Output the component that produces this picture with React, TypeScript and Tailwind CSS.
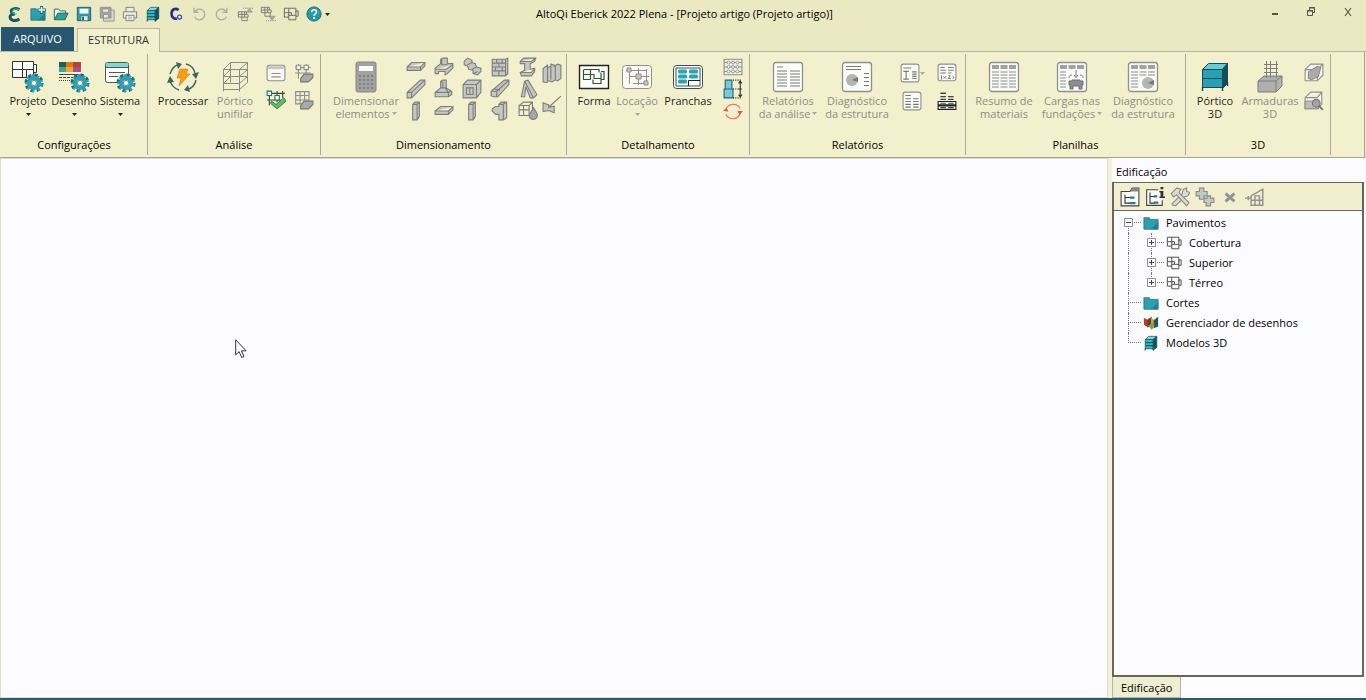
import type { ReactNode } from "react";

const GRAY = "#8f8f8f";
const MID = "#c6c6c2";
const INK = "#3c463c";

type SvgProps = { size?: string; box?: string; children: ReactNode };

function Svg({ size = "h-[18px] w-[18px]", box = "0 0 18 18", children }: SvgProps) {
  return (
    <svg viewBox={box} className={`${size} shrink-0`} fill="none" aria-hidden="true">
      {children}
    </svg>
  );
}

function Big({ children }: { children: ReactNode }) {
  return <Svg size="h-8 w-8" box="0 0 32 32">{children}</Svg>;
}

/* ---------- shared drawings ---------- */

function Gear() {
  return (
    <g>
      <circle cx="22" cy="22" r="7" stroke="#2b6473" strokeWidth="5" strokeDasharray="3 2.5" />
      <circle cx="22" cy="22" r="7.6" stroke="#2fa5b8" strokeWidth="2.6" strokeDasharray="2.2 3.3" strokeDashoffset="-.4" />
      <circle cx="22" cy="22" r="5" stroke="#2fa0b4" strokeWidth="4" />
      <circle cx="22" cy="22" r="2.6" fill="#fff" stroke="#2b6473" strokeWidth=".7" />
    </g>
  );
}

function Page({ children, inset = false }: { children?: ReactNode; inset?: boolean }) {
  return (
    <g>
      <rect x="1.5" y="1.5" width="29" height="29" rx="2.5" fill="#fbfbf8" stroke={GRAY} strokeWidth="1.3" />
      {inset && (
        <g fill="#a2a2a2">
          <rect x="4" y="4" width="7" height="4" />
          <rect x="12.5" y="4" width="7" height="4" />
          <rect x="21" y="4" width="7" height="4" />
        </g>
      )}
      {children}
    </g>
  );
}

function Plan({ color = INK }: { color?: string }) {
  return (
    <g stroke={color} strokeWidth="1.1">
      <path d="M1.500 2.500h13v5M1.500 2.500v10h5M1.500 7.500h8v3M6.500 2.500v13h8v-4M9.500 10.500h5M6.500 10.500h3" />
      <path d="M14.500 5.500h2.500v6h-2.500z" />
    </g>
  );
}

function Building({ light = "#35b4c4", dark = "#14505c" }: { light?: string; dark?: string }) {
  return (
    <g stroke={dark} strokeWidth=".8">
      <path d="M2.500 5l4-3.500h9L11.500 5z" fill="#8fd8de" />
      <path d="M2.500 5h9v3.500h-9zM2.500 8.500h9v3.500h-9zM2.500 12h9v3.500h-9z" fill={light} />
      <path d="M11.500 5l4-3.500V14l-4 3z" fill={dark} />
      <path d="M2.500 15v2.500M11.500 15v2.500" strokeWidth="1.200" />
    </g>
  );
}

function Folder({ plus = false }: { plus?: boolean }) {
  return (
    <g>
      <path d="M1 3h6l1.500 2H17v11H1z" fill="#2b9fb0" stroke="#1e6976" strokeWidth=".8" />
      <path d="M9 16l8-8v8z" fill="#227f8e" />
      {plus && (
        <g>
          <path d="M13 0v9M8.500 4.500H18" stroke="#1e6976" strokeWidth="3.400" />
          <path d="M13 1v7M9.500 4.500H17" stroke="#e8fbfb" strokeWidth="1.800" />
        </g>
      )}
    </g>
  );
}

/* ---------- title bar ---------- */

const quickAccess: { label: string; disabled?: boolean; icon: ReactNode }[] = [
  {
    label: "Eberick",
    icon: (
      <g>
        <path d="M14 4C9 1.500 4 3.500 5 6.500c.5 1.500 2 2.500 4 2.500-3 0-6 1-5.500 4 .5 3.500 6 4.500 10.500 1.500" stroke="#17566a" strokeWidth="3.400" />
        <path d="M13.500 4C9 2.500 6 4 6 6.500c.5 2 3 2.500 5 2.500" stroke="#37c08b" strokeWidth="1.300" />
      </g>
    ),
  },
  { label: "Novo projeto", icon: <Folder plus /> },
  {
    label: "Abrir projeto",
    icon: (
      <g stroke="#215f6b" strokeWidth="1">
        <path d="M1.500 15.500V3.500h5l1.500 2h6v3" fill="#f3f3e2" />
        <path d="M1.500 15.500l4-7.500H17l-3.500 7.500z" fill="#2ba58f" />
      </g>
    ),
  },
  {
    label: "Salvar",
    icon: (
      <g>
        <path d="M1.500 1.500h15v15h-15z" fill="#2aa2ad" stroke="#185865" />
        <path d="M4 3h10v5.500H4z" fill="#f6f8f2" />
        <path d="M5.500 11h8v5.500h-8z" fill="#eef3ee" stroke="#185865" strokeWidth=".7" />
        <path d="M7 12h2v4H7z" fill="#185865" />
      </g>
    ),
  },
  {
    label: "Salvar tudo",
    disabled: true,
    icon: (
      <g stroke={GRAY}>
        <path d="M5 4.500h12V17H5z" fill="#d8d8d0" />
        <path d="M1.500 1.500h12v12h-12z" fill="#a5a5a5" />
        <path d="M4 3.500h7v3.500H4zM5 9.500h5.500v4H5z" fill="#ececea" />
      </g>
    ),
  },
  {
    label: "Imprimir",
    icon: (
      <g stroke="#767676">
        <path d="M4.500 6V1.500h9V6M1.500 6.500h15v7h-15z" fill="#ececdc" />
        <path d="M4.500 10.500h9v6h-9z" fill="#fbfbf6" />
        <path d="M6.500 12.500h5M6.500 14.500h5" strokeWidth=".7" />
      </g>
    ),
  },
  { label: "Pórtico 3D", icon: <Building /> },
  {
    label: "AltoQi Cloud",
    icon: (
      <g>
        <path d="M12 4.500C8 1.500 4 4 4 8.500c0 4.500 3 6.500 6 5.500" stroke="#22308f" strokeWidth="3" />
        <circle cx="13" cy="12.500" r="2.200" fill="#fff" stroke="#3a49c4" strokeWidth="1.500" />
      </g>
    ),
  },
  {
    label: "Desfazer",
    disabled: true,
    icon: <path d="M3.500 2v5h5M4 7a6 6 0 1 1 0 5" stroke="#adada5" strokeWidth="1.500" />,
  },
  {
    label: "Refazer",
    disabled: true,
    icon: <path d="M14.500 2v5h-5M14 7a6 6 0 1 0 0 5" stroke="#adada5" strokeWidth="1.500" />,
  },
  {
    label: "Pavimento acima",
    icon: (
      <g stroke="#777">
        <path d="M1.500 6.500h9v3M1.500 6.500v6h9M5.500 6.500v10h6v-4M1.500 9.500h11v3h-2M8.500 6.500v6" />
        <path d="M7 2.500h11" strokeDasharray="1 1" />
        <path d="M10.500 7l3.500-4 3.500 4z" fill="#aaa" strokeWidth=".5" />
      </g>
    ),
  },
  {
    label: "Pavimento abaixo",
    icon: (
      <g stroke="#777">
        <path d="M1.500 1.500h9v3M1.500 1.500v6h9M5.500 1.500v10h6v-4M1.500 4.500h11v3h-2M8.500 1.500v6" />
        <path d="M7 16.500h11" strokeDasharray="1 1" />
        <path d="M10 11.500h7L13.500 16z" fill="#aaa" strokeWidth=".5" />
      </g>
    ),
  },
  { label: "Croqui", icon: <Plan color="#6b6b6b" /> },
  {
    label: "Ajuda",
    icon: (
      <g>
        <circle cx="9" cy="9" r="8" fill="#2398aa" stroke="#1c6674" />
        <path d="M6.300 7c0-3.800 5.500-3.500 5.500-.3C11.800 9 9 8.600 9 11" stroke="#fff" strokeWidth="1.800" />
        <path d="M8 12.500h2v2H8z" fill="#fff" />
      </g>
    ),
  },
];

function Caret({ faded = false }: { faded?: boolean }) {
  return (
    <Svg size="h-[3px] w-[5px]" box="0 0 5 3">
      <path d="M0 0h5L2.500 3z" fill={faded ? "#a8a8a8" : "#222"} />
    </Svg>
  );
}

function TitleBar() {
  return (
    <header className="flex h-7 shrink-0 items-center pl-[3px]">
      <div className="flex flex-1 items-center">
        {quickAccess.map((q) => (
          <button key={q.label} aria-label={q.label} disabled={q.disabled} className="flex h-6 w-[23px] items-center justify-center">
            <Svg size="h-4 w-4">{q.icon}</Svg>
          </button>
        ))}
        <button aria-label="Personalizar">
          <Caret />
        </button>
      </div>
      <h1 className="text-[11px] leading-4 text-black">AltoQi Eberick 2022 Plena - [Projeto artigo (Projeto artigo)]</h1>
      <div className="flex flex-1 items-center justify-end pb-1 text-[#555]">
        <button aria-label="Minimizar" className="flex w-9 justify-center">
          <Svg size="h-3 w-3" box="0 0 12 12"><path d="M3 8h6" stroke="currentColor" strokeWidth="2" /></Svg>
        </button>
        <button aria-label="Restaurar" className="flex w-9 justify-center">
          <Svg size="h-3 w-3" box="0 0 12 12">
            <path d="M4.500 4V1.500h5v5H8M2.500 4.500h5v5h-5z" stroke="currentColor" />
            <path d="M4 2h6M2 5h6" stroke="currentColor" />
          </Svg>
        </button>
        <button aria-label="Fechar" className="flex w-[37px] justify-center">
          <Svg size="h-3 w-3" box="0 0 12 12"><path d="M3 2l6 8M9 2l-6 8" stroke="currentColor" strokeWidth="1.200" /></Svg>
        </button>
      </div>
    </header>
  );
}

/* ---------- ribbon ---------- */

type CommandProps = {
  icon: ReactNode;
  lines: string[];
  width: string;
  disabled?: boolean;
  caret?: "below" | "inline";
};

function Command({ icon, lines, width, disabled = false, caret }: CommandProps) {
  return (
    <button
      disabled={disabled}
      className={`flex shrink-0 flex-col items-center text-[11px] leading-[13px] whitespace-nowrap ${width} ${disabled ? "text-[#8d8d8a]" : "text-[#1f1f1f]"}`}
    >
      <Big>{icon}</Big>
      <span className="mt-px">{lines[0]}</span>
      {lines[1] && (
        <span className="flex items-center">
          {lines[1]}
          {caret === "inline" && <span className="ml-[2px]"><Caret faded={disabled} /></span>}
        </span>
      )}
      {caret === "below" && <span className="mt-[6px]"><Caret faded={disabled} /></span>}
    </button>
  );
}

function Small({ label, disabled = true, caret = false, children }: { label: string; disabled?: boolean; caret?: boolean; children: ReactNode }) {
  return (
    <button aria-label={label} disabled={disabled} className="flex items-center justify-center">
      <Svg size="h-5 w-5">{children}</Svg>
      {caret && <Caret faded />}
    </button>
  );
}

function Group({ title, width, inset, children }: { title: string; width: string; inset: string; children: ReactNode }) {
  return (
    <section aria-label={title} className={`my-[2px] flex shrink-0 flex-col border-r border-[#a9a9a0] ${width}`}>
      <div className={`flex flex-1 items-start pt-[7px] ${inset}`}>{children}</div>
      <h2 className="pb-[2px] text-center text-[11px] leading-4 text-black">{title}</h2>
    </section>
  );
}

const tableLines = "M5 6h6M5 10h10M5 13h10M5 16h10M5 19h10M5 22h10M5 25h10M18 10h10M18 13h10M18 16h10M18 19h10M18 22h10M18 25h10";

const members: { label: string; icon: ReactNode }[] = [
  { label: "Vigas", icon: <path d="M1 9l4-4h12v3l-4 4H1zM1 9h12l4-4M13 9v3" /> },
  { label: "Blocos", icon: <path d="M1 10l5-4V2l2-1h4v5h5v4l-5 5-2 1v-3H4v2H1zM7 7h5M1 11h10l6-4M7 2v5M6 6l-5 4" /> },
  { label: "Escadas", icon: <path d="M2 4l3-3 4 2v2l3 1 1 3 4 1v3l-3 3-4-1v-3l-4-1-1-3-3-1zM5 7l4-2M9 11l4-2M10 15l4-2" /> },
  { label: "Alvenaria", icon: <path d="M2 2h12l2-1v14l-2 2H2zM2 5.500h12M2 9h12M2 12.500h12M6 2v3.500M11 2v3.500M8 5.500V9M5 9v3.500M11 9v3.500M8 12.500V17M14 2v15" /> },
  { label: "Perfis metálicos", icon: <path d="M2 4l3-3h11l-1 3-4 2v5l4-1v3l-3 4H3l-1-3 4-2V6L2 6zM2 4h10l4-3M3 14h9l3-4" /> },
  { label: "Barras", icon: <path d="M1 12L13 1h4v4L5 17H1zM1 12h4v5M5 12L17 1" /> },
  { label: "Sapatas", icon: <path d="M1 12l5-4V2l2-1h3v7l5 3v3l-3 2H1zM1 12h12l3-1M13 12v4M6 2l2 1v5M6 8h4l3 4" /> },
  { label: "Reservatórios", icon: <path d="M1 5l4-4h12v11l-4 5H1zM1 5h12v12M13 5l4-4M4 8h6v6H4zM7 8v6" /> },
  { label: "Vigas metálicas", icon: <path d="M1 11L13 1h4v4L7 16H3l-2-1zM1 11h5v5M6 11L17 1M4 9l5 1" /> },
  { label: "Rampas", icon: <path d="M3 16L6 2l3-1 8 13-3 3h-3L7 7 6 16zM6 2l8 15" /> },
  { label: "Pilares", icon: <path d="M6 3l2-2h4v13l-2 3H6zM6 3h4v14M10 3l2-2" /> },
  { label: "Lajes", icon: <path d="M1 9l5-4h11v3l-4 4H1zM1 9h12l4-4M13 9v3" /> },
  { label: "Tubulões", icon: <path d="M6 3l2-2h4v13l-2 3H6zM6 3h4v14M10 3l2-2" /> },
  { label: "Consolos", icon: <path d="M8 3l2-2h5v14l-3 2H8v-5H5L2 9V7l3-2h3zM8 3h4v14M12 3l3-2" /> },
  {
    label: "Incêndio",
    icon: (
      <g>
        <path d="M1 4l4-3h8v9M1 4h9v9H1zM1 8h9M5 4v9M10 4l3-3" fill="none" />
        <path d="M14 6l3 5c2 7-7 7-7 2 0-2 3-4 4-7z" fill="#a5a5a5" />
      </g>
    ),
  },
];

function Ribbon() {
  return (
    <div className="mr-px flex h-[106px] shrink-0 border-r border-b border-[#a3a39a] bg-[#f3f1cd] pl-[1px]">
      <Group title="Configurações" width="w-[147px]" inset="pl-1">
        <Command
          width="w-[46px]"
          lines={["Projeto"]}
          caret="below"
          icon={
            <g>
              <path d="M.5.5h21v16H.5zM10.500.5v16M.5 8.500h14v8M14.500 8.500h7" fill="#fdfdf9" stroke="#343434" />
              <path d="M21.500 3.500h3v8h-3z" fill="#fdfdf9" stroke="#343434" />
              <Gear />
            </g>
          }
        />
        <Command
          width="w-[46px]"
          lines={["Desenho"]}
          caret="below"
          icon={
            <g>
              <path d="M1 1h7v5H1z" fill="#285e4c" />
              <path d="M8 1h7v5H8z" fill="#d87916" />
              <path d="M15 1h8v5h-8z" fill="#b74339" />
              <path d="M1 6h7v5H1z" fill="#3fa79a" />
              <path d="M8 6h7v5H8z" fill="#efa82e" />
              <path d="M15 6h8v5h-8z" fill="#a8508f" />
              <path d="M1 13.500h21" stroke="#444" />
              <path d="M1 16.500h14" stroke="#444" strokeDasharray="3 1" />
              <path d="M1 19.500h13" stroke="#444" strokeDasharray="1 1" />
              <Gear />
            </g>
          }
        />
        <Command
          width="w-[46px]"
          lines={["Sistema"]}
          caret="below"
          icon={
            <g>
              <rect x="1.5" y="1.5" width="23" height="20" rx="2" fill="#fdfdf9" stroke="#4a5a55" />
              <path d="M2 2h22v4H2z" fill="#85d5d0" />
              <path d="M2 6.500h22M5 11.500h16M5 15.500h9" stroke="#4a5a55" />
              <Gear />
            </g>
          }
        />
      </Group>

      <Group title="Análise" width="w-[173px]" inset="pl-[7px]">
        <Command
          width="w-[56px]"
          lines={["Processar"]}
          icon={
            <g>
              <g stroke="#3b675b" strokeWidth="1.4">
                <path d="M3 13C5 7 8 4 13 3" />
                <path d="M19 3c5 1 8 5 9 9" />
                <path d="M29 19c-1 5-5 9-10 10" />
                <path d="M12 29c-4-1-8-5-9-9" />
              </g>
              <g fill="#3b675b">
                <path d="M9 1l6 2-4 5z" />
                <path d="M25 13l7-2-3 7z" />
                <path d="M23 31l-6-2 4-5z" />
                <path d="M0 22l3-7 4 6z" />
              </g>
              <path d="M13 8h8l-2 5h4L12 25l2-8h-4z" fill="#f59d15" stroke="#e0760f" strokeWidth=".6" />
            </g>
          }
        />
        <Command
          width="w-[48px]"
          disabled
          lines={["Pórtico", "unifilar"]}
          icon={
            <g stroke="#8b8b8b">
              <path d="M4.500 8.500v22M20.500 8.500v22M11.500 1.500v20M28.500 1.500v20" />
              <path d="M4.500 8.500h16l8-7h-17zM4.500 15.500h16l8-7h-17zM4.500 22.500h16l8-7h-17z" />
              <path d="M4.500 28.500h16l8-7" />
            </g>
          }
        />
        <div className="-mt-[2px] ml-[3px] grid w-14 grid-cols-2 grid-rows-[27px_27px]">
          <Small label="Avisos">
            <rect x="1" y="2" width="16" height="14" rx="2" fill="#f9f9f2" stroke={GRAY} />
            <path d="M1.500 3h15v2.500h-15z" fill={MID} />
            <path d="M5 9.500h8M5 12.500h8" stroke={GRAY} />
          </Small>
          <Small label="Remover carga">
            <path d="M1 4h14M1 9h14M4 1v13M11 1v9" stroke={GRAY} />
            <path d="M2 2h4v4H2zM9 2h4v4H9z" fill="#eee" stroke={GRAY} />
            <path d="M6 14l3-4h8v3l-4 4H6z" fill="#aaa" stroke="#777" />
          </Small>
          <Small label="Verificar grelha" disabled={false}>
            <path d="M1 3h16M1 9h12M3 1v13M10 1v10M15 1v6" stroke="#3c463c" />
            <path d="M1 1h4v4H1zM8 5h4v4H8z" fill="#eafaf4" stroke="#28707a" />
            <path d="M5 10l4 3 7-6 2 3-8 7-6-5z" fill="#59bd62" stroke="#2f7b3a" strokeWidth=".8" />
          </Small>
          <Small label="Remover grelha">
            <path d="M1.500 1.500h12v11h-12zM5.500 1.500v11M9.500 1.500v11M1.500 5h12M1.500 9h12" stroke={GRAY} />
            <path d="M6 14l3-4h8v3l-4 4H6z" fill="#aaa" stroke="#777" />
          </Small>
        </div>
      </Group>

      <Group title="Dimensionamento" width="w-[246px]" inset="pl-[9px]">
        <Command
          width="w-[72px]"
          disabled
          caret="inline"
          lines={["Dimensionar", "elementos"]}
          icon={
            <g>
              <rect x="6" y="1" width="20" height="30" rx="2" fill="#a2a2a2" stroke="#858585" />
              <path d="M9 5h14v5H9z" fill="#fafaf5" />
              <g fill="#7f7f7f">
                {[14, 18, 22, 26].map((y) => (
                  <path key={y} d={`M9 ${y}h2v2h-2zM13 ${y}h2v2h-2zM17 ${y}h2v2h-2zM21 ${y}h2v2h-2z`} />
                ))}
              </g>
            </g>
          }
        />
        <div className="-mt-[5px] grid w-[140px] grid-cols-5 grid-rows-[22px_22px_22px]">
          {members.map((m) => (
            <Small key={m.label} label={m.label}>
              <g fill={MID} stroke="#7e7e7e">{m.icon}</g>
            </Small>
          ))}
        </div>
        <div className="-mt-1 grid w-4 grid-rows-[32px_32px]">
          <Small label="Painéis">
            <path d="M1 5l4-3v2l3-1V1l3 1v1l3-2 3 1v12l-3 2-2-1-3 2-3-1-2 2-3-1zM5 4v12M8 3v12M12 3v12" fill={MID} stroke="#7e7e7e" />
          </Small>
          <Small label="Cortar painel">
            <path d="M1 7l5 2v2l5-1v6l-5-2-5 1zM6 11L17 1" fill={MID} stroke="#7e7e7e" />
          </Small>
        </div>
      </Group>

      <Group title="Detalhamento" width="w-[183px]" inset="pl-[7px]">
        <Command
          width="w-10"
          lines={["Forma"]}
          icon={
            <g>
              <path d="M1.500 4.500h29v23h-29z" fill="#fdfdf9" stroke="#222" strokeWidth="1.4" />
              <path d="M6 8.500h15v3M5.500 8.500v10h7M6 13.500h10v4M12.500 8.500v10M15 18.500v4h8v-5M16 17.500h7v-6M23 10.500h3v8h-3" stroke="#2b5534" strokeWidth="1.2" />
            </g>
          }
        />
        <Command
          width="w-[46px]"
          disabled
          caret="below"
          lines={["Locação"]}
          icon={
            <g stroke={GRAY}>
              <rect x="1.5" y="4.500" width="29" height="23" rx="3" fill="#fafaf2" />
              <path d="M5 9.500h20M8.500 8v15M17.500 7v17M25.500 8v15M8 15.500h20M12 22.500h15" />
              <path d="M6 7h4v4H6zM15 13h5v5h-5zM23 20h4v4h-4z" fill={MID} />
            </g>
          }
        />
        <Command
          width="w-[56px]"
          lines={["Pranchas"]}
          icon={
            <g>
              <rect x="1.500" y="4.500" width="29" height="23" rx="3" fill="#fdfdf9" stroke="#35525a" />
              <path d="M4 7h24v18H4z" stroke="#35525a" />
              <g fill="#2aa3b4">
                <rect x="6" y="8.500" width="9" height="4" rx="1.500" />
                <rect x="6" y="13.500" width="9" height="4" rx="1.500" />
                <rect x="6" y="18.500" width="9" height="4" rx="1.500" />
                <rect x="17" y="8.500" width="9" height="4" rx="1.500" />
                <rect x="17" y="13.500" width="9" height="4" rx="1.500" />
              </g>
              <path d="M16.500 25v-5.500H28" stroke="#222" />
            </g>
          }
        />
        <div className="-mt-[5px] grid w-[34px] grid-rows-[22px_22px_22px]">
          <Small label="Armaduras">
            <path d="M1 2h16v14H1z" fill="#eeeee4" stroke={GRAY} />
            <path d="M1 5h16M1 9h16M1 13h16" stroke={GRAY} />
            {[5, 9, 13].map((x) => (
              <g key={x} fill="#fff" stroke={GRAY} strokeWidth=".8">
                <circle cx={x} cy="5" r="1.300" />
                <circle cx={x} cy="9" r="1.300" />
                <circle cx={x} cy="13" r="1.300" />
              </g>
            ))}
          </Small>
          <Small label="Cotas" disabled={false}>
            <path d="M2 1h6v8H2zM1 9h8v8H1z" fill="#72cddd" stroke="#2f6470" />
            <path d="M9 1h8M9 9h5M9 17h8" stroke="#333" strokeDasharray="1 1" />
            <path d="M15.500 2v14M14 4l1.500-2L17 4M14 14l1.500 2 1.500-2M14 9h3" stroke="#333" />
          </Small>
          <Small label="Atualizar" disabled={false}>
            <path d="M2.500 8a7 7 0 0 1 13-1M15.500 11a7 7 0 0 1-13 1" stroke="#e2796a" strokeWidth="1.100" />
            <path d="M0 9l3-3 2 3.500zM18 9l-3 3.500L13 9z" fill="#df5b42" />
          </Small>
        </div>
      </Group>

      <Group title="Relatórios" width="w-[216px]" inset="pl-[6px]">
        <Command
          width="w-16"
          disabled
          caret="inline"
          lines={["Relatórios", "da análise"]}
          icon={<Page><path d={tableLines} stroke="#7b7b7b" /></Page>}
        />
        <Command
          width="w-[74px]"
          disabled
          lines={["Diagnóstico", "da estrutura"]}
          icon={
            <Page>
              <path d="M5 5.500h15M5 8.500h15M23 12.500h5M23 16.500h5M23 20.500h5M23 24.500h5" stroke="#7b7b7b" />
              <circle cx="11" cy="19" r="6" fill="#b4b4b4" />
              <path d="M11 19l6-3v5z" fill="#777" />
            </Page>
          }
        />
        <div className="-mt-[2px] grid w-[70px] grid-cols-[36px_34px] grid-rows-[28px_28px]">
          <Small label="Relatório de vigas" caret>
            <rect x="1" y="1" width="16" height="16" rx="2" fill="#fafaf5" stroke={GRAY} />
            <path d="M3 4.500h7M3 7.500h5M5.500 7.500v7M3 14.500h5M11 8h4M11 10h4M11 12h4M11 14h4" stroke="#7b7b7b" />
          </Small>
          <Small label="Memorial de cálculo">
            <rect x="1" y="1" width="16" height="15" rx="2" fill="#fafaf5" stroke={GRAY} />
            <path d="M3 4h4M3 6.500h5M3 9h5M10 4h5M10 6.500h5M10 9h3M4 11v4M6 12l2 2M8 12l-2 2M10 11.500h2L10 14h2.500M14 12l1.500 1L14 14" stroke="#7b7b7b" strokeWidth=".9" />
          </Small>
          <Small label="Relatório geral">
            <rect x="1" y="1" width="16" height="16" rx="2" fill="#fafaf5" stroke={GRAY} />
            <path d="M3 4h5M3 7h5M3 9.500h5M3 12h5M3 14.500h5M10 7h5M10 9.500h5M10 12h5M10 14.500h5" stroke="#7b7b7b" />
          </Small>
          <Small label="Quantitativos" disabled={false}>
            <path d="M3 2h5M3 5h5M3 7.500h5M10 5h5M10 7.500h5" stroke="#444" strokeWidth="1.200" />
            <path d="M1 9.500h16v3H1zM1 13.500h16v3H1z" fill="#fff" stroke="#222" />
            <path d="M3 11h5M10 11h5M3 15h5M10 15h5" stroke="#444" />
          </Small>
        </div>
      </Group>

      <Group title="Planilhas" width="w-[220px]" inset="pl-1">
        <Command
          width="w-[68px]"
          disabled
          lines={["Resumo de", "materiais"]}
          icon={
            <Page inset>
              {[11, 14, 17, 20, 23, 26].map((y) => (
                <path key={y} d={`M4 ${y}h7M12.5 ${y}h7M21 ${y}h7`} stroke="#8b8b8b" />
              ))}
            </Page>
          }
        />
        <Command
          width="w-[68px]"
          disabled
          caret="inline"
          lines={["Cargas nas", "fundações"]}
          icon={
            <Page inset>
              <path d="M4 11h6M4 14h6M4 17h6M4 20h6M4 23h6M4 26h6" stroke="#8b8b8b" />
              <path d="M20 9v7M18 14l2 2.500 2-2.500M13 17c0-2 1-3 3-3M27 17c0-2-1-3-3-3" stroke="#777" />
              <path d="M13 20h3v-1h8v1h3v4h-1v4h-3v-3h-6v3h-3v-4h-1z" fill="#8e8e8e" stroke="#707070" />
            </Page>
          }
        />
        <Command
          width="w-[74px]"
          disabled
          lines={["Diagnóstico", "da estrutura"]}
          icon={
            <Page inset>
              <path d="M4 11h7M12.500 11h7M21 11h7M4 14h7M4 17h7M4 20h7M4 23h7M4 26h7M12.500 14h7M21 14h7" stroke="#8b8b8b" />
              <circle cx="21" cy="22" r="6" fill="#b4b4b4" />
              <path d="M21 22l6-3v5z" fill="#777" />
            </Page>
          }
        />
      </Group>

      <Group title="3D" width="w-[145px]" inset="pl-[7px]">
        <Command
          width="w-11"
          lines={["Pórtico", "3D"]}
          icon={
            <g stroke="#164c58">
              <path d="M3.500 8.500l6-6h19l-5 6z" fill="#66cbd3" />
              <path d="M3.500 8.500h20v9h-20zM3.500 17.500h20v9h-20z" fill="#28a0b2" />
              <path d="M23.500 8.500l5-6v20l-5 5z" fill="#174d59" />
              <path d="M3.500 26v4M23.500 26v4M28.500 21v4" strokeWidth="1.400" />
            </g>
          }
        />
        <Command
          width="w-[66px]"
          disabled
          lines={["Armaduras", "3D"]}
          icon={
            <g stroke="#7d7d7d">
              <path d="M12.500 0v17M16.500 0v17M22.500 0v17M10 3.500h14M10 7.500h14M10 11.500h14" />
              <path d="M4 20l6-5h18v10l-6 6H4z" fill="#b0b0ae" />
              <path d="M4 20h18v11M22 20l6-5M12.500 10v7M16.500 10v7M22.500 10v7" />
            </g>
          }
        />
        <div className="-mt-[2px] grid w-[22px] grid-rows-[28px_28px]">
          <Small label="Cubo de corte">
            <path d="M1 6l5-5h11v10l-5 5H1zM1 6h11v10M12 6l5-5" fill="#f6f6ee" stroke={GRAY} />
            <path d="M4 8l8-5 3 1-2 8-6 3-3-1z" fill="#ababab" stroke={GRAY} />
          </Small>
          <Small label="Localizar">
            <path d="M1 6l5-5h10v11l-4 4H1zM1 6h11l4-5" fill="#f6f6ee" stroke={GRAY} />
            <path d="M1 9h12v7H1z" fill="#bdbdbb" stroke={GRAY} />
            <circle cx="11" cy="11" r="3.500" fill="#a4a4a4" stroke="#777" />
            <path d="M13 13l4 4" stroke="#777" strokeWidth="1.800" />
          </Small>
        </div>
      </Group>
    </div>
  );
}

/* ---------- side panel ---------- */

const treeTools: { label: string; disabled?: boolean; icon: ReactNode }[] = [
  {
    label: "Projeto",
    icon: (
      <g>
        <path d="M1 4h8l2-3h6v16H1z" fill="#fbfbf5" stroke="#444" />
        <path d="M9 4l2-3h6v3z" fill="#888" />
        <path d="M4.500 7v7.500H9M4.500 9.500H9" stroke="#333" />
        <path d="M9 8.500h4v2H9zM9 13.500h5v2H9z" fill="#25808b" />
      </g>
    ),
  },
  {
    label: "Informações",
    icon: (
      <g>
        <path d="M12 2.500H1.500v14h14V12" fill="#fbfbf5" stroke="#444" />
        <path d="M4.500 5v9.500H9M4.500 8.500H9" stroke="#333" />
        <path d="M8 7.500h3v2H8zM8 13h4v2H8z" fill="#25808b" />
        <path d="M14 0h2.500v2H14zM13 3.500h3.500v5H18v1.500h-5V8.500h1v-3.500h-1z" fill="#333" />
      </g>
    ),
  },
  {
    label: "Configurar",
    disabled: true,
    icon: (
      <g stroke="#8c8c88">
        <path d="M2 15l9-9 1-4 3-1v3l3 1-2 3-3 1-8 8-3-1z" fill="#dcdcd6" />
        <path d="M1 6l5-5 4 1-2 3 9 9-2 3L6 7 3 9z" fill="#dcdcd6" />
      </g>
    ),
  },
  {
    label: "Adicionar",
    disabled: true,
    icon: (
      <g fill={MID} stroke="#8c8c88">
        <path d="M4 1h4v3h3v4H8v3H4V8H1V4h3z" />
        <path d="M11 8h3v2h3v4h-3v3h-4v-3H8v-4h3z" />
      </g>
    ),
  },
  { label: "Excluir", disabled: true, icon: <path d="M5 6l8 7M13 6l-8 7" stroke="#929292" strokeWidth="2.600" /> },
  {
    label: "Corte",
    disabled: true,
    icon: <path d="M0 10h5M3 8v4M5.500 8L16 2v14.500H5.500zM5.500 12H16M9 8h4v4H9zM9 12v4M13 12v4" stroke="#929292" strokeWidth="1.300" />,
  },
];

function Branch({ last = false, first = false, state }: { last?: boolean; first?: boolean; state?: "open" | "closed" }) {
  return (
    <span className="relative flex h-5 w-[13px] shrink-0 flex-col">
      <span className={`h-[10px] border-b border-dotted border-[#777] ${first ? "" : "border-l"}`} />
      {!last && <span className="h-[10px] border-l border-dotted border-[#777]" />}
      {state && (
        <button aria-label={state === "open" ? "Recolher" : "Expandir"} className="absolute top-[5px] -left-1 h-[9px] w-[9px] bg-[#fcfcfe]">
          <Svg size="h-[9px] w-[9px]" box="0 0 9 9">
            <path d="M.5.5h8v8h-8z" stroke="#8e8e8e" />
            <path d={state === "open" ? "M2 4.500h5" : "M2 4.500h5M4.500 2v5"} stroke="#444" />
          </Svg>
        </button>
      )}
    </span>
  );
}

function TreeItem({ label, icon, branch, nested = false }: { label: string; icon: ReactNode; branch: ReactNode; nested?: boolean }) {
  return (
    <li className="flex h-5 items-center">
      {nested && <span className="h-5 w-[23px] border-l border-dotted border-[#777]" />}
      {branch}
      <span className="ml-[2px] flex items-center gap-[7px]">
        <Svg size="h-4 w-4">{icon}</Svg>
        {label}
      </span>
    </li>
  );
}

function SidePanel() {
  return (
    <aside className="flex w-[254px] shrink-0 flex-col bg-[#fcfcfe] pr-[2px]">
      <h2 className="pt-[6px] pb-[2px] pl-1 text-[11px] leading-4 text-black">Edificação</h2>
      <div className="flex flex-1 flex-col border-2 border-t border-[#66665f]">
        <div className="flex h-7 items-center border-b border-[#66665f] bg-[#f1efcd] pl-[3px]">
          {treeTools.map((t) => (
            <button key={t.label} aria-label={t.label} disabled={t.disabled} className="flex h-6 w-[25px] items-center justify-center">
              <Svg size="h-5 w-5">{t.icon}</Svg>
            </button>
          ))}
        </div>
        <ul className="pt-[2px] pl-[14px] text-[11px] text-black">
          <TreeItem label="Pavimentos" icon={<Folder />} branch={<Branch first state="open" />} />
          {["Cobertura", "Superior", "Térreo"].map((name, i) => (
            <TreeItem key={name} nested label={name} icon={<Plan color="#4e504a" />} branch={<Branch last={i === 2} state="closed" />} />
          ))}
          <TreeItem label="Cortes" icon={<Folder />} branch={<Branch />} />
          <TreeItem
            label="Gerenciador de desenhos"
            branch={<Branch />}
            icon={
              <g>
                <path d="M1 3l5 3v8l-5-3z" fill="#bd3b2a" />
                <path d="M5 5l5-3v9l-5 3z" fill="#5d3f35" />
                <path d="M9 3l4 3v6l-4-1z" fill="#d4a12f" />
                <path d="M12 6l5-4v11l-5 2z" fill="#26535d" />
                <path d="M6 12l4-3 3 3-3 5z" fill="#78a844" />
              </g>
            }
          />
          <TreeItem label="Modelos 3D" icon={<Building />} branch={<Branch last />} />
        </ul>
      </div>
      <div className="flex h-[21px]">
        <button className="border-r border-b border-l border-[#b5b5aa] bg-[#f0eed0] px-2 pt-px text-[11px] leading-4 text-black">Edificação</button>
      </div>
    </aside>
  );
}

export default function App() {
  return (
    <div className="flex h-screen flex-col overflow-hidden bg-[#ebe9c2] font-['Open_Sans','Noto_Sans',sans-serif]">
      <TitleBar />
      <nav className="flex h-6 shrink-0 items-end border-b border-[#b5b5a8] pl-[1px] text-[11px]">
        <button className="h-6 w-[73px] bg-[#29566f] text-white">ARQUIVO</button>
        <button className="-mb-px ml-[3px] h-6 w-[83px] border border-b-0 border-[#b5b5a8] bg-[#f3f1cd] text-[#333]">ESTRUTURA</button>
      </nav>
      <Ribbon />
      <div className="flex min-h-0 flex-1 border-b-2 border-[#2a5a74] bg-[#f3f2d8]">
        <main className="relative flex-1 border border-[#dcdccb] bg-[#fcfcfe]">
          <svg viewBox="0 0 12 20" className="absolute top-[180px] left-[234px] h-5 w-3" aria-hidden="true">
            <path d="M.7.8v15l3.400-3.200 2.600 5.900 2.300-1-2.600-5.700h4.700z" fill="#fff" stroke="#333" />
          </svg>
        </main>
        <div className="w-1 shrink-0" />
        <SidePanel />
      </div>
    </div>
  );
}
